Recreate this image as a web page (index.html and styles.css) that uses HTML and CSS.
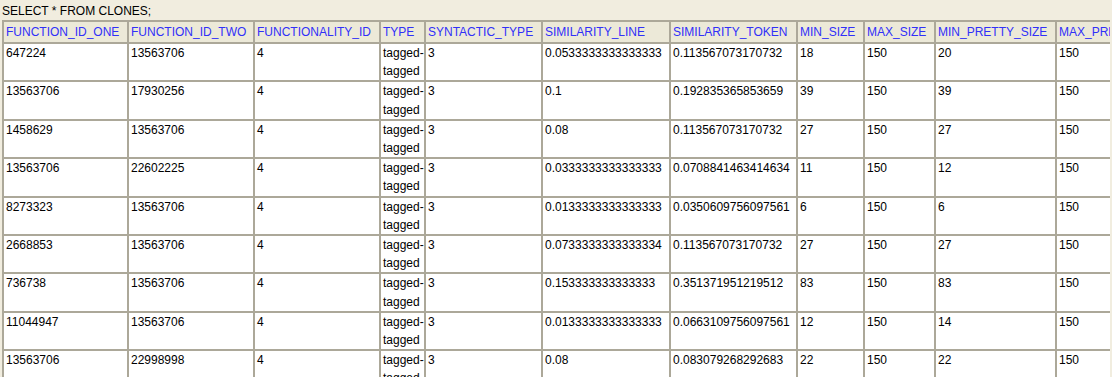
FILE: index.html
```html
<!DOCTYPE html>
<html lang="en">
<head>
  <meta charset="UTF-8">
  <title>SELECT * FROM CLONES</title>
  <link rel="stylesheet" href="styles.css">
</head>
<body>
  <div class="query">SELECT * FROM CLONES;</div>
  <table class="results">
    <thead>
      <tr>
        <th class="c-one">FUNCTION_ID_ONE</th>
        <th class="c-two">FUNCTION_ID_TWO</th>
        <th class="c-func">FUNCTIONALITY_ID</th>
        <th class="c-type">TYPE</th>
        <th class="c-syn">SYNTACTIC_TYPE</th>
        <th class="c-line">SIMILARITY_LINE</th>
        <th class="c-token">SIMILARITY_TOKEN</th>
        <th class="c-min">MIN_SIZE</th>
        <th class="c-max">MAX_SIZE</th>
        <th class="c-minp">MIN_PRETTY_SIZE</th>
        <th class="c-maxp">MAX_PRETTY_SIZE</th>
      </tr>
    </thead>
    <tbody>
      <tr><td>647224</td><td>13563706</td><td>4</td><td>tagged-tagged</td><td>3</td><td>0.0533333333333333</td><td>0.113567073170732</td><td>18</td><td>150</td><td>20</td><td>150</td></tr>
      <tr><td>13563706</td><td>17930256</td><td>4</td><td>tagged-tagged</td><td>3</td><td>0.1</td><td>0.192835365853659</td><td>39</td><td>150</td><td>39</td><td>150</td></tr>
      <tr><td>1458629</td><td>13563706</td><td>4</td><td>tagged-tagged</td><td>3</td><td>0.08</td><td>0.113567073170732</td><td>27</td><td>150</td><td>27</td><td>150</td></tr>
      <tr><td>13563706</td><td>22602225</td><td>4</td><td>tagged-tagged</td><td>3</td><td>0.0333333333333333</td><td>0.0708841463414634</td><td>11</td><td>150</td><td>12</td><td>150</td></tr>
      <tr><td>8273323</td><td>13563706</td><td>4</td><td>tagged-tagged</td><td>3</td><td>0.0133333333333333</td><td>0.0350609756097561</td><td>6</td><td>150</td><td>6</td><td>150</td></tr>
      <tr><td>2668853</td><td>13563706</td><td>4</td><td>tagged-tagged</td><td>3</td><td>0.0733333333333334</td><td>0.113567073170732</td><td>27</td><td>150</td><td>27</td><td>150</td></tr>
      <tr><td>736738</td><td>13563706</td><td>4</td><td>tagged-tagged</td><td>3</td><td>0.153333333333333</td><td>0.351371951219512</td><td>83</td><td>150</td><td>83</td><td>150</td></tr>
      <tr><td>11044947</td><td>13563706</td><td>4</td><td>tagged-tagged</td><td>3</td><td>0.0133333333333333</td><td>0.0663109756097561</td><td>12</td><td>150</td><td>14</td><td>150</td></tr>
      <tr><td>13563706</td><td>22998998</td><td>4</td><td>tagged-tagged</td><td>3</td><td>0.08</td><td>0.083079268292683</td><td>22</td><td>150</td><td>22</td><td>150</td></tr>
    </tbody>
  </table>
</body>
</html>
```

FILE: styles.css
```css
html {
  overflow: hidden;
}
body {
  font-family: "Liberation Sans", Arial, sans-serif;
  font-size: 12px;
  line-height: 18px;
  color: #000;
  margin: 2px;
  background-color: #f1eddf;
}
.query {
  height: 18px;
}
.results {
  table-layout: fixed;
  width: 1176px;
  border-collapse: separate;
  border-spacing: 0;
  border-top: 2px solid #aca899;
  border-left: 2px solid #aca899;
  background-color: white;
}
.results th,
.results td {
  box-sizing: border-box;
  border-right: 2px solid #aca899;
  border-bottom: 2px solid #aca899;
  text-align: left;
  vertical-align: top;
  overflow: hidden;
}
.results th {
  padding: 1px 2px;
  font-weight: normal;
  color: #3030f8;
  background-color: #ece9d8;
  white-space: nowrap;
}
.results td {
  padding: 0 2px;
  line-height: 18.2px;
}
.c-one { width: 125px; }
.c-two { width: 126px; }
.c-func { width: 126px; }
.c-type { width: 45px; }
.c-syn { width: 117px; }
.c-line { width: 128px; }
.c-token { width: 127px; }
.c-min { width: 67px; }
.c-max { width: 71px; }
.c-minp { width: 121px; }
.c-maxp { width: 121px; }
```
